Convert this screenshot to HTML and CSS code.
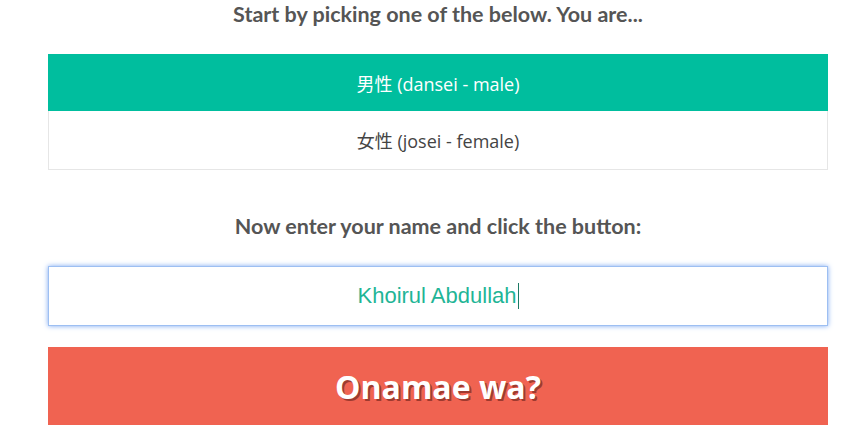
FILE: index.html
```html
<!DOCTYPE html>
<html>
<head>
<meta charset="utf-8">
<link rel="stylesheet" href="styles.css">
</head>
<body>
<div class="wrap">
  <h2 class="title">Start by picking one of the below. You are...</h2>
  <div class="options">
    <div class="opt opt-active">男性 (dansei - male)</div>
    <div class="opt">女性 (josei - female)</div>
  </div>
  <h2 class="title title-2">Now enter your name and click the button:</h2>
  <div class="field"><span class="name">Khoirul Abdullah</span><span class="caret"></span></div>
  <button class="go">Onamae wa?</button>
</div>
</body>
</html>
```
FILE: styles.css
```css
html, body { margin: 0; padding: 0; background: #fff; }
.wrap { width: 780px; margin: 0 0 0 48px; display: flex; flex-direction: column; }
.title { font-family: Lato, "Noto Sans", sans-serif; font-weight: 700; font-size: 21.5px; color: #555; text-align: center; margin: 0; height: 29px; line-height: 29px; }
.options { margin-top: 25px; border: 1px solid #e6e6e6; border-top: none; }
.opt { height: 58px; display: flex; align-items: center; justify-content: center; font-family: "Open Sans", "Noto Sans CJK JP", sans-serif; font-size: 18px; color: #444; }
.opt-active { background: #00be9e; color: #fff; height: 57px; margin: 0 -1px; }
.title-2 { margin-top: 42px; }
.field { margin-top: 25px; height: 58px; border: 1px solid #9dbff2; box-shadow: 0 0 5px #7aa7f2; display: flex; align-items: center; justify-content: center; font-family: "Liberation Sans", Arial, sans-serif; font-size: 22px; color: #1fb596; background: #fff; }
.caret { width: 1px; height: 26px; background: #1d7a64; margin-left: 1px; }
.go { margin-top: 21px; height: 78px; border: none; background: #f06351; color: #fff; font-family: "Open Sans", sans-serif; font-weight: 700; font-size: 32px; text-shadow: 2px 2px 0 #9e3a2f; padding: 0; cursor: pointer; }
```
